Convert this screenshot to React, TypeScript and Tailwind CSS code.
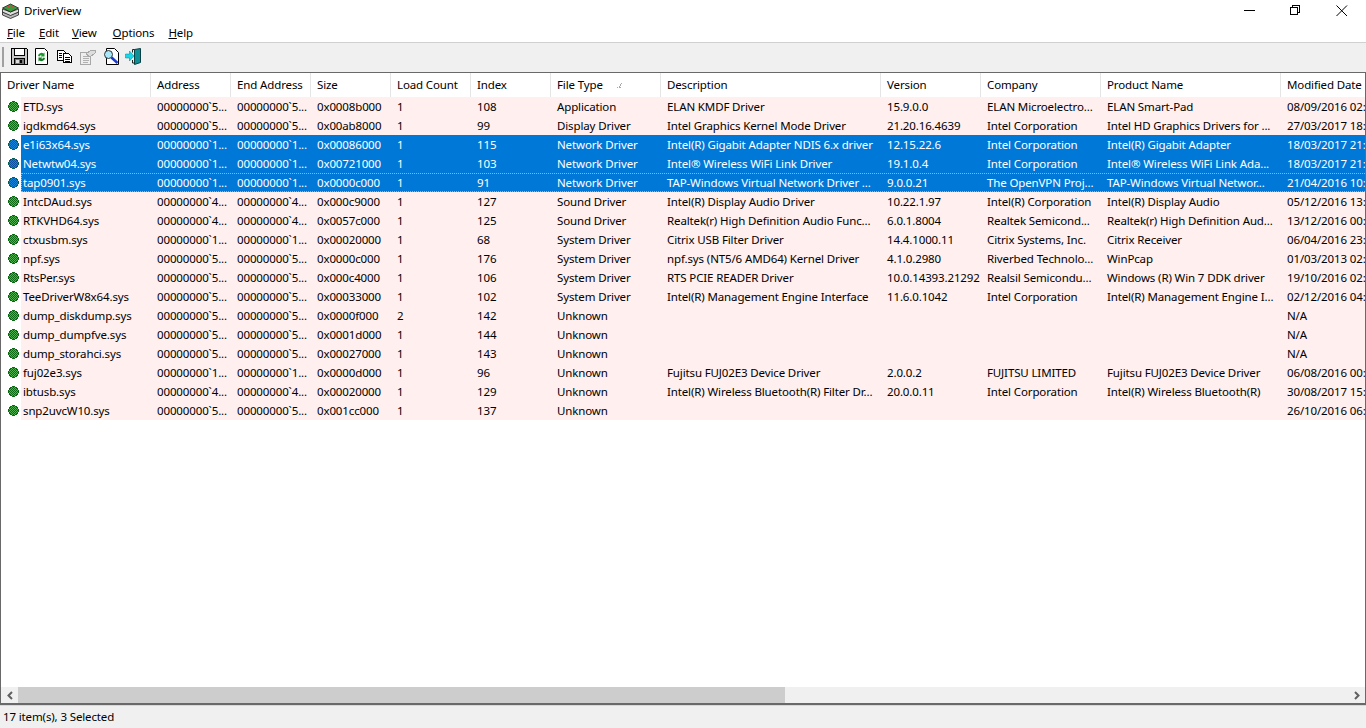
const font = "font-['Noto_Sans','Liberation_Sans',sans-serif]";

const columns = [
  { name: 'Driver Name', width: 'w-[150px]' },
  { name: 'Address', width: 'w-[80px]' },
  { name: 'End Address', width: 'w-[80px]' },
  { name: 'Size', width: 'w-[80px]' },
  { name: 'Load Count', width: 'w-[80px]' },
  { name: 'Index', width: 'w-[80px]' },
  { name: 'File Type', width: 'w-[110px]' },
  { name: 'Description', width: 'w-[220px]' },
  { name: 'Version', width: 'w-[100px]' },
  { name: 'Company', width: 'w-[120px]' },
  { name: 'Product Name', width: 'w-[180px]' },
  { name: 'Modified Date', width: 'w-[160px]' },
];

const rows = [
  ['ETD.sys', '00000000`5...', '00000000`5...', '0x0008b000', '1', '108', 'Application', 'ELAN KMDF Driver', '15.9.0.0', 'ELAN Microelectro...', 'ELAN Smart-Pad', '08/09/2016 02:1'],
  ['igdkmd64.sys', '00000000`5...', '00000000`5...', '0x00ab8000', '1', '99', 'Display Driver', 'Intel Graphics Kernel Mode Driver', '21.20.16.4639', 'Intel Corporation', 'Intel HD Graphics Drivers for ...', '27/03/2017 18:4'],
  ['e1i63x64.sys', '00000000`1...', '00000000`1...', '0x00086000', '1', '115', 'Network Driver', 'Intel(R) Gigabit Adapter NDIS 6.x driver', '12.15.22.6', 'Intel Corporation', 'Intel(R) Gigabit Adapter', '18/03/2017 21:5'],
  ['Netwtw04.sys', '00000000`1...', '00000000`1...', '0x00721000', '1', '103', 'Network Driver', 'Intel® Wireless WiFi Link Driver', '19.1.0.4', 'Intel Corporation', 'Intel® Wireless WiFi Link Ada...', '18/03/2017 21:5'],
  ['tap0901.sys', '00000000`1...', '00000000`1...', '0x0000c000', '1', '91', 'Network Driver', 'TAP-Windows Virtual Network Driver ...', '9.0.0.21', 'The OpenVPN Proj...', 'TAP-Windows Virtual Networ...', '21/04/2016 10:1'],
  ['IntcDAud.sys', '00000000`4...', '00000000`4...', '0x000c9000', '1', '127', 'Sound Driver', 'Intel(R) Display Audio Driver', '10.22.1.97', 'Intel(R) Corporation', 'Intel(R) Display Audio', '05/12/2016 13:3'],
  ['RTKVHD64.sys', '00000000`4...', '00000000`4...', '0x0057c000', '1', '125', 'Sound Driver', 'Realtek(r) High Definition Audio Func...', '6.0.1.8004', 'Realtek Semicond...', 'Realtek(r) High Definition Aud...', '13/12/2016 00:3'],
  ['ctxusbm.sys', '00000000`1...', '00000000`1...', '0x00020000', '1', '68', 'System Driver', 'Citrix USB Filter Driver', '14.4.1000.11', 'Citrix Systems, Inc.', 'Citrix Receiver', '06/04/2016 23:4'],
  ['npf.sys', '00000000`5...', '00000000`5...', '0x0000c000', '1', '176', 'System Driver', 'npf.sys (NT5/6 AMD64) Kernel Driver', '4.1.0.2980', 'Riverbed Technolo...', 'WinPcap', '01/03/2013 02:4'],
  ['RtsPer.sys', '00000000`5...', '00000000`5...', '0x000c4000', '1', '106', 'System Driver', 'RTS PCIE READER Driver', '10.0.14393.21292', 'Realsil Semicondu...', 'Windows (R) Win 7 DDK driver', '19/10/2016 02:0'],
  ['TeeDriverW8x64.sys', '00000000`5...', '00000000`5...', '0x00033000', '1', '102', 'System Driver', 'Intel(R) Management Engine Interface', '11.6.0.1042', 'Intel Corporation', 'Intel(R) Management Engine I...', '02/12/2016 04:0'],
  ['dump_diskdump.sys', '00000000`5...', '00000000`5...', '0x0000f000', '2', '142', 'Unknown', '', '', '', '', 'N/A'],
  ['dump_dumpfve.sys', '00000000`5...', '00000000`5...', '0x0001d000', '1', '144', 'Unknown', '', '', '', '', 'N/A'],
  ['dump_storahci.sys', '00000000`5...', '00000000`5...', '0x00027000', '1', '143', 'Unknown', '', '', '', '', 'N/A'],
  ['fuj02e3.sys', '00000000`1...', '00000000`1...', '0x0000d000', '1', '96', 'Unknown', 'Fujitsu FUJ02E3 Device Driver', '2.0.0.2', 'FUJITSU LIMITED', 'Fujitsu FUJ02E3 Device Driver', '06/08/2016 00:5'],
  ['ibtusb.sys', '00000000`4...', '00000000`4...', '0x00020000', '1', '129', 'Unknown', 'Intel(R) Wireless Bluetooth(R) Filter Dr...', '20.0.0.11', 'Intel Corporation', 'Intel(R) Wireless Bluetooth(R)', '30/08/2017 15:0'],
  ['snp2uvcW10.sys', '00000000`5...', '00000000`5...', '0x001cc000', '1', '137', 'Unknown', '', '', '', '', '26/10/2016 06:5'],
];

// 11x11 dithered ball, same look as the old comctl state image
function Ball({ selected, blue }: { selected: boolean; blue: boolean }) {
  const edge = selected ? '#0a5f50' : '#0c6a14';
  const a = blue ? '#0a4fa0' : selected ? '#0b6b4a' : '#0c6a14';
  const b = selected ? '#1580d8' : '#4fb04f';
  const cells = [];
  for (let y = 0; y < 11; y++) {
    for (let x = 0; x < 11; x++) {
      const d = Math.hypot(x - 5, y - 5);
      if (d > 5.3) continue;
      const fill = d > 4.6 ? edge : (x + y) % 2 === 0 ? a : b;
      cells.push(<rect key={`${x}-${y}`} x={x} y={y} width="1" height="1" fill={fill} />);
    }
  }
  return (
    <svg width="11" height="11" viewBox="0 0 11 11" shapeRendering="crispEdges" className="shrink-0">
      {cells}
    </svg>
  );
}

function ToolbarIcons() {
  return (
    <div className="flex items-center h-full pl-[2px] pb-[2px]">
      <div className="w-[2px] h-[20px] bg-[#a0a0a0] mr-[7px]" />
      <svg width="17" height="17" viewBox="0 0 17 17" className="mr-[7px]" shapeRendering="crispEdges">
        <path d="M0.500 0.500h15l1 1v15h-16z" fill="#c8c8c8" stroke="#000" />
        <path d="M3.500 0.500h10v7h-10z" fill="#fff" stroke="#000" />
        <path d="M3.500 10.500h10v6h-10z" fill="#777" stroke="#000" />
        <path d="M9 12h2v3H9z" fill="#000" />
        <path d="M5 12h3v3H5z" fill="#ddd" />
      </svg>
      <svg width="13" height="17" viewBox="0 0 13 17" className="mr-[9px]">
        <path d="M0.500 0.500h9l3 3v13h-12z" fill="#fff" stroke="#000" />
        <path d="M3 8a3.500 3.500 0 0 1 5.500-2.500l1-1v4H5.500l1.300-1.200A2 2 0 0 0 4.500 8.500z" fill="#1a9a2a" />
        <path d="M10 10a3.500 3.500 0 0 1-5.500 2.500l-1 1v-4h4l-1.300 1.200A2 2 0 0 0 8.500 9.500z" fill="#127a22" />
      </svg>
      <svg width="15" height="13" viewBox="0 0 15 13" className="mr-[8px]" shapeRendering="crispEdges">
        <path d="M0.500 0.500h6l2 2v8h-8z" fill="#fff" stroke="#000" />
        <path d="M6.500 3.500h5l3 3v6h-8z" fill="#fff" stroke="#000" />
        <path d="M2 3h3M2 5h3M2 7h3M8 7h5M8 9h5M8 11h5" stroke="#000" />
      </svg>
      <svg width="16" height="16" viewBox="0 0 16 16" className="mr-[8px]" shapeRendering="crispEdges">
        <path d="M0.500 3.500h10v12h-10z" fill="#eee" stroke="#a8a8a8" />
        <path d="M3 7h6M3 9h6M3 11h6M3 13h5" stroke="#b0b0b0" />
        <path d="M6 5l5-4h4v3l-5 4z" fill="#ddd" stroke="#a8a8a8" />
      </svg>
      <svg width="15" height="17" viewBox="0 0 15 17" className="mr-[6px]">
        <path d="M2.500 0.500h8l4 4v12h-12z" fill="#fff" stroke="#000" />
        <circle cx="4.500" cy="6.500" r="4" fill="#a8e8f8" stroke="#333" />
        <path d="M7.500 9.500l6 5.500" stroke="#1a3ad0" strokeWidth="2.500" />
      </svg>
      <svg width="16" height="17" viewBox="0 0 16 17">
        <path d="M9.500 1.500l6-1v14l-6 2z" fill="#0f8f96" stroke="#0b3f44" />
        <path d="M7.500 1.500h2M7.500 1.500v3M7.500 12v3h2" fill="none" stroke="#222" />
        <path d="M0.500 6h4V3L9 8l-4.500 5v-3h-4z" fill="#18d8e8" stroke="#0a7f88" strokeWidth="0.500" />
      </svg>
    </div>
  );
}

export default function App() {
  return (
    <div className={`${font} w-[1366px] h-[728px] flex flex-col bg-white text-[11.5px] tracking-[-0.13px] text-black overflow-hidden`}>
      <div className="h-[22px] flex items-center shrink-0 relative">
        <svg width="17" height="16" viewBox="0 0 17 16" className="ml-[2px] mr-[5px]">
          <path d="M0.500 9v3l8 3.500 8-3.500V9l-8 3z" fill="#b8b8b8" stroke="#222" strokeWidth="0.800" />
          <path d="M0.500 6v3l8 3.500 8-3.500V6l-8 3z" fill="#e0e0e0" stroke="#222" strokeWidth="0.800" />
          <path d="M0.500 5l8-4 8 4-8 4z" fill="#3c9a3c" stroke="#222" strokeWidth="0.800" />
          <path d="M6 3l1 1M9 3l2 1M11 5l1 1" stroke="#e04040" />
        </svg>
        <span>DriverView</span>
        <div className="ml-auto flex items-start pt-[4px] h-full">
          <svg width="12" height="12" viewBox="0 0 12 12" className="mr-[33px]" shapeRendering="crispEdges">
            <path d="M0 6.500h11" stroke="#000" />
          </svg>
          <svg width="12" height="12" viewBox="0 0 12 12" className="mr-[34px]" shapeRendering="crispEdges">
            <path d="M1.500 3.500h7v7h-7zM3.500 3V1.500h7v7H9" fill="none" stroke="#000" />
          </svg>
          <svg width="14" height="14" viewBox="0 0 14 14" className="mr-[17px]">
            <path d="M1.500 1.500l10.500 10.500M12 1.500l-10.500 10.500" stroke="#000" />
          </svg>
        </div>
      </div>
      <div className="h-[20px] flex items-center shrink-0 pt-[2px]">
        <span className="ml-[7px]"><u>F</u>ile</span>
        <span className="ml-[14px]"><u>E</u>dit</span>
        <span className="ml-[13px]"><u>V</u>iew</span>
        <span className="ml-[16px]"><u>O</u>ptions</span>
        <span className="ml-[14px]"><u>H</u>elp</span>
      </div>
      <div className="h-[30px] shrink-0 bg-[#f0f0f0] border-t border-[#d0d0d0]">
        <ToolbarIcons />
      </div>
      <div className="flex-1 min-h-0 flex flex-col border-t border-r border-b-[2px] border-l border-[#696969] overflow-hidden">
        <div className="flex h-[24px] shrink-0">
          {columns.map((c) => (
            <div key={c.name} className={`${c.width} shrink-0 flex items-center pl-[6px] border-r border-[#e5e5e5] relative`}>
              {c.name}
              {c.name === 'File Type' && (
                <svg width="7" height="7" viewBox="0 0 7 7" className="absolute left-[65px] top-[9px]" shapeRendering="crispEdges">
                  <path d="M5 1h1v1H5zM4 2h1v1H4zM4 3h1v1H4zM3 4h1v1H3zM2 5h1v1H2zM1 6h4v-1H1z" fill="#a8a8a8" />
                </svg>
              )}
            </div>
          ))}
        </div>
        <div className="flex-1 min-h-0 overflow-hidden">
          {rows.map((row, idx) => {
            const selected = idx >= 2 && idx <= 4;
            return (
              <div key={row[0]} className="flex h-[19px]">
                <div className="w-[20px] shrink-0 flex items-center justify-center pl-[4px] pb-[1px]">
                  <Ball selected={selected} blue={idx === 3} />
                </div>
                <div className={`flex ${selected ? 'bg-[#0078d7] text-white' : 'bg-[#ffefef]'} ${idx === 4 ? 'outline-1 outline-dotted -outline-offset-1 outline-[#e8a060]' : ''}`}>
                  {row.map((cell, i) => (
                    <div key={i} className={`${i === 0 ? 'w-[130px] pl-[2px]' : columns[i].width + ' pl-[6px]'} shrink-0 flex items-center whitespace-nowrap overflow-hidden`}>
                      {cell}
                    </div>
                  ))}
                </div>
              </div>
            );
          })}
        </div>
        <div className="h-[16px] shrink-0 bg-[#f0f0f0] flex items-center">
          <div className="w-[17px] h-full flex items-center justify-center">
            <svg width="8" height="9" viewBox="0 0 8 9"><path d="M6 1L2.500 4.500 6 8" fill="none" stroke="#606060" strokeWidth="2" /></svg>
          </div>
          <div className="w-[767px] h-full bg-[#cdcdcd]" />
          <div className="ml-auto w-[17px] h-full flex items-center justify-center">
            <svg width="8" height="9" viewBox="0 0 8 9"><path d="M2 1l3.500 3.500L2 8" fill="none" stroke="#606060" strokeWidth="2" /></svg>
          </div>
        </div>
      </div>
      <div className="h-[23px] shrink-0 bg-[#f0f0f0] border-t border-[#d8d8d8] flex items-center pl-[3px] pb-[1px]">
        17 item(s), 3 Selected
      </div>
    </div>
  );
}
